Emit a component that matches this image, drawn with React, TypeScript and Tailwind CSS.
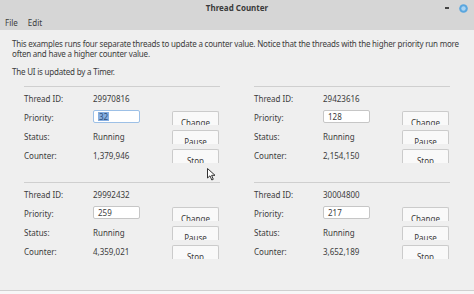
import React from "react";

type Panel = { id: string; priority: string; counter: string; focused?: boolean };

const panels: Panel[] = [
  { id: "29970816", priority: "32", counter: "1,379,946", focused: true },
  { id: "29423616", priority: "128", counter: "2,154,150" },
  { id: "29992432", priority: "259", counter: "4,359,021" },
  { id: "30004800", priority: "217", counter: "3,652,189" },
];

function Btn({ label }: { label: string }) {
  return (
    <div className="mt-[3px] h-[14px] w-[47px] overflow-hidden rounded-t-[2px] border border-b-0 border-[#cbcbcb] bg-[#f9f9f9] text-center">
      <div className="pt-[6px] text-[8px] leading-[10px] text-[#3a3a3a]">{label}</div>
    </div>
  );
}

function ThreadPanel({ p }: { p: Panel }) {
  return (
    <div className="flex flex-col border-t border-[#cfcfcf] pt-[2px] pb-[17px]">
      <div className="grid h-[19px] grid-cols-[69px_79px_47px] items-center">
        <span>Thread ID:</span>
        <span>{p.id}</span>
        <span />
      </div>
      <div className="grid h-[19px] grid-cols-[69px_79px_47px] items-start">
        <span className="leading-[19px]">Priority:</span>
        <div
          className={
            "mt-[2px] flex h-[13px] w-[47px] items-center rounded-[2px] border bg-white pl-[4px] " +
            (p.focused ? "border-[#9dc0e6]" : "border-[#c6c6c6]")
          }
        >
          {p.focused ? (
            <span className="bg-[#86aee0] px-[1px] leading-[9px] text-[#2d4f7c]">{p.priority}</span>
          ) : (
            <span className="leading-[9px]">{p.priority}</span>
          )}
        </div>
        <Btn label="Change" />
      </div>
      <div className="grid h-[19px] grid-cols-[69px_79px_47px] items-start">
        <span className="leading-[19px]">Status:</span>
        <span className="leading-[19px]">Running</span>
        <Btn label="Pause" />
      </div>
      <div className="grid h-[19px] grid-cols-[69px_79px_47px] items-start">
        <span className="leading-[19px]">Counter:</span>
        <span className="leading-[19px]">{p.counter}</span>
        <Btn label="Stop" />
      </div>
    </div>
  );
}

export default function App() {
  return (
    <div
      className="relative flex h-[294px] w-[474px] flex-col overflow-hidden bg-[#efefef] text-[8px] text-[#3c3c3c]"
      style={{ fontFamily: '"Noto Sans", "Open Sans", sans-serif' }}
    >
      <div className="grid h-[16px] grid-cols-[1fr_auto_1fr] items-center bg-[#d6d6d6]">
        <div />
        <div className="text-[8px] font-bold text-[#3a3a3a]">Thread Counter</div>
        <div className="flex items-center justify-end gap-[10px] pr-[6px]">
          <div className="h-[1.5px] w-[4px] bg-[#444]" />
          <svg width="9" height="9" viewBox="0 0 9 9">
            <circle cx="4.5" cy="4.5" r="4.3" fill="#5aa6de" />
            <circle cx="4.5" cy="4.5" r="2.2" fill="#a9d3f3" />
          </svg>
        </div>
      </div>
      <div className="flex h-[14px] items-center gap-[10px] bg-[#d6d6d6] pl-[5px] text-[8px]">
        <span>File</span>
        <span>Edit</span>
      </div>
      <div className="flex flex-1 flex-col border-b border-[#cfcfcf] pl-[12px] pr-[2px] pt-[9px]">
        <p className="leading-[9.5px] tracking-[-0.2px]">
          This examples runs four separate threads to update a counter value. Notice that the threads with the higher priority run more
          often and have a higher counter value.
        </p>
        <p className="mt-[8.5px] leading-[9.5px] tracking-[-0.2px]">The UI is updated by a Timer.</p>
        <div className="mt-[10px] grid grid-cols-[196px_196px] gap-x-[34px] pl-[12px]">
          {panels.map((p) => (
            <ThreadPanel key={p.id} p={p} />
          ))}
        </div>
      </div>
      <div className="h-[3px] bg-[#f7f7f7]" />
      <svg className="absolute left-[207px] top-[168px]" width="9" height="13" viewBox="0 0 9 13">
        <path d="M0.5 0.5 L0.5 10 L3 7.8 L4.8 12 L6.3 11.3 L4.6 7.3 L8 7.3 Z" fill="#fff" stroke="#333" strokeWidth="1" strokeLinejoin="round" />
      </svg>
    </div>
  );
}
